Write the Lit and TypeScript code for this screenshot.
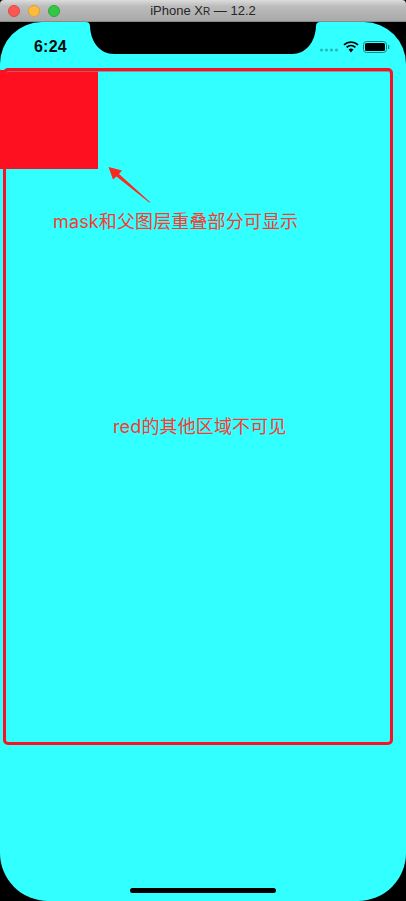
import { LitElement, html, css } from "lit";
import { customElement } from "lit/decorators.js";

@customElement("app-root")
export class AppRoot extends LitElement {
  static styles = css`
    :host {
      display: block;
      width: 406px;
      height: 901px;
      overflow: hidden;
      font-family: "Liberation Sans", "Noto Sans CJK SC", sans-serif;
      background: #000;
    }
    .titlebar {
      height: 22px;
      box-sizing: border-box;
      background: linear-gradient(#dcdcdc, #bcbcbc 30%, #a9a9a9);
      border-bottom: 1px solid #8a8a8a;
      border-radius: 4px 4px 0 0;
      position: relative;
      display: flex;
      align-items: center;
      justify-content: center;
      font-size: 13px;
      color: #262626;
    }
    .lights {
      position: absolute;
      left: 8px;
      top: 5px;
      display: flex;
      gap: 8px;
    }
    .light {
      width: 12px;
      height: 12px;
      border-radius: 50%;
      box-sizing: border-box;
    }
    .l-red { background: #fc5753; border: 1px solid #df4744; }
    .l-yellow { background: #fdbc40; border: 1px solid #de9f34; }
    .l-green { background: #33c748; border: 1px solid #27aa35; }
    .small-r { font-size: 10px; }
    .screen {
      position: relative;
      height: 879px;
      background: #32ffff;
      border-radius: 42px 42px 48px 48px;
      overflow: hidden;
      box-sizing: border-box;
      padding-top: 46px;
    }
    .notch {
      position: absolute;
      left: 86px;
      top: 0;
    }
    .time {
      position: absolute;
      left: 34px;
      top: 16px;
      font-size: 16px;
      line-height: 18px;
      font-weight: 700;
      color: #0b0b0b;
      letter-spacing: 0.2px;
    }
    .status {
      position: absolute;
      left: 319px;
      top: 18px;
      display: flex;
      align-items: center;
      gap: 4px;
    }
    .frame {
      position: relative;
      z-index: 1;
      box-sizing: border-box;
      width: 390px;
      height: 677px;
      margin-left: 3px;
      border: 3px solid #fe1020;
      border-radius: 5px;
      box-shadow: inset 0 1px 0 rgba(125, 135, 140, 0.75);
    }
    .square {
      position: absolute;
      left: 0;
      top: 48px;
      width: 98px;
      height: 99px;
      background: #fe1020;
    }
    .arrow {
      position: absolute;
      left: 100px;
      top: 140px;
    }
    .note {
      position: absolute;
      color: #fb3a30;
      font-family: Inter, "Noto Sans CJK SC", sans-serif;
      font-size: 18px;
      line-height: 22px;
      letter-spacing: 0.13px;
      white-space: nowrap;
    }
    .note-a { left: 53px; top: 189px; }
    .note-b { left: 113px; top: 394px; }
    .home {
      position: absolute;
      left: 130px;
      bottom: 8px;
      width: 146px;
      height: 5px;
      border-radius: 3px;
      background: #000;
    }
  `;

  render() {
    return html`
      <div class="titlebar">
        <div class="lights">
          <div class="light l-red"></div>
          <div class="light l-yellow"></div>
          <div class="light l-green"></div>
        </div>
        <span>iPhone X<span class="small-r">R</span> — 12.2</span>
      </div>
      <div class="screen">
        <svg class="notch" width="234" height="32" viewBox="0 0 234 32">
          <path
            d="M0 0 C2.5 0 3.8 1.4 4 4 C4.6 20 14 32 28 32 L206 32 C220 32 229.4 20 230 4 C230.2 1.4 231.5 0 234 0 Z"
            fill="#000"
          ></path>
        </svg>
        <div class="time">6:24</div>
        <div class="status">
          <svg width="20" height="14" viewBox="0 0 20 14">
            <circle cx="2.5" cy="10" r="1.6" fill="#20bcbe"></circle>
            <circle cx="7.5" cy="10" r="1.6" fill="#20bcbe"></circle>
            <circle cx="12.5" cy="10" r="1.6" fill="#20bcbe"></circle>
            <circle cx="17.5" cy="10" r="1.6" fill="#20bcbe"></circle>
          </svg>
          <svg width="16" height="12" viewBox="0 0 16 12">
            <path d="M8 11.5 L5.6 8.6 A3.8 3.8 0 0 1 10.4 8.6 Z" fill="#000"></path>
            <path d="M3.6 6.4 A6.6 6.6 0 0 1 12.4 6.4" fill="none" stroke="#000" stroke-width="1.8"></path>
            <path d="M1 3.8 A10.4 10.4 0 0 1 15 3.8" fill="none" stroke="#000" stroke-width="1.8"></path>
          </svg>
          <svg width="27" height="12" viewBox="0 0 27 12">
            <rect x="0.5" y="0.5" width="23" height="11" rx="3" fill="none" stroke="#128a8c"></rect>
            <rect x="2" y="2" width="20" height="8" rx="1.5" fill="#000"></rect>
            <rect x="25" y="4" width="1.2" height="4" rx="0.6" fill="#128a8c"></rect>
          </svg>
        </div>
        <div class="frame"></div>
        <div class="square"></div>
        <svg class="arrow" width="56" height="48" viewBox="0 0 56 48">
          <path d="M8.5 5 L22 8.5 L19 12 L50 40 L49.5 40.8 L16.5 14.5 L13 17.5 Z" fill="#fb2a20"></path>
        </svg>
        <div class="note note-a">mask和父图层重叠部分可显示</div>
        <div class="note note-b">red的其他区域不可见</div>
        <div class="home"></div>
      </div>
    `;
  }
}
